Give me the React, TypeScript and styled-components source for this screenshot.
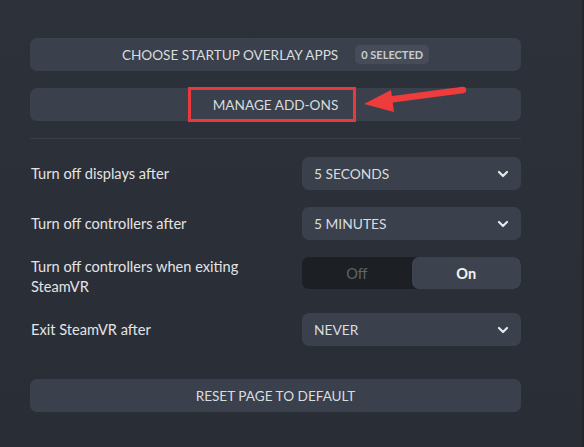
import styled, { createGlobalStyle } from "styled-components";

const GlobalStyle = createGlobalStyle`
  html, body {
    margin: 0;
    padding: 0;
    background: #2a2e36;
  }
  * {
    box-sizing: border-box;
  }
`

const Page = styled.div`
  position: relative;
  width: 584px;
  height: 447px;
  padding: 38px 61px 0 30px;
  background: linear-gradient(180deg, #2d313a 0%, #292d35 100%);
  border-right: 2px solid #23262d;
  font-family: "Lato", "Noto Sans", sans-serif;
  color: #dcdedf;
  overflow: hidden;
`

const Stack = styled.div`
  display: flex;
  flex-direction: column;
`

const WideButton = styled.div<{ $gap?: number }>`
  position: relative;
  display: flex;
  align-items: center;
  justify-content: center;
  gap: 17px;
  height: 33px;
  margin-bottom: ${p => p.$gap ?? 17}px;
  border-radius: 7px;
  background: #3b414c;
  font-size: 13.6px;
  color: #d9dcdf;
  text-transform: uppercase;
`

const Badge = styled.span`
  display: inline-flex;
  align-items: center;
  height: 19px;
  padding: 0 6px;
  border-radius: 5px;
  background: #474d58;
  font-size: 11px;
  font-weight: 700;
  color: #c8ccd1;
`

const Divider = styled.div`
  height: 1px;
  background: #3a3f48;
  margin-bottom: 18px;
`

const Row = styled.div<{ $gap?: number; $top?: boolean }>`
  display: flex;
  align-items: ${p => (p.$top ? "flex-start" : "center")};
  justify-content: space-between;
  margin-bottom: ${p => p.$gap ?? 17}px;
`

const Label = styled.div`
  width: 236px;
  margin-left: 1px;
  font-size: 14.6px;
  line-height: 20px;
  color: #e2e4e6;
`

const Select = styled.div`
  display: flex;
  align-items: center;
  justify-content: space-between;
  width: 219px;
  height: 33px;
  padding: 0 12px 0 12px;
  border-radius: 7px;
  background: #3b414c;
  font-size: 13.8px;
  color: #d9dcdf;
`

const Toggle = styled.div`
  display: flex;
  width: 219px;
  height: 32px;
  border-radius: 7px;
  background: #1c1f24;
  overflow: hidden;
`

const ToggleHalf = styled.div<{ $active?: boolean }>`
  flex: 1;
  display: flex;
  align-items: center;
  justify-content: center;
  border-radius: 7px;
  background: ${p => (p.$active ? "#3d434e" : "transparent")};
  color: ${p => (p.$active ? "#f2f3f4" : "#5f636a")};
  font-weight: ${p => (p.$active ? 700 : 400)};
  font-size: 14.5px;
`

const Highlight = styled.div`
  position: absolute;
  left: 158px;
  top: -1px;
  width: 168px;
  height: 35px;
  border: 3px solid #e8393c;
`

const Arrow = styled.svg`
  position: absolute;
  left: 359px;
  top: 84px;
`

const Chevron = () => (
  <svg width="12" height="12" viewBox="0 0 12 12">
    <path d="M2 4 L6 8 L10 4" fill="none" stroke="#e6e8ea" strokeWidth="2.2" strokeLinecap="round" strokeLinejoin="round" />
  </svg>
)

const settings = [
  { label: "Turn off displays after", value: "5 SECONDS" },
  { label: "Turn off controllers after", value: "5 MINUTES" },
]

export default function App() {
  return (
    <>
      <GlobalStyle />
      <Page>
        <Stack>
          <WideButton>
            Choose Startup Overlay Apps
            <Badge>0 SELECTED</Badge>
          </WideButton>
          <WideButton>
            Manage Add-Ons
            <Highlight />
          </WideButton>
          <Divider />
          {settings.map(s => (
            <Row key={s.label}>
              <Label>{s.label}</Label>
              <Select>
                {s.value}
                <Chevron />
              </Select>
            </Row>
          ))}
          <Row $gap={16} $top>
            <Label>Turn off controllers when exiting SteamVR</Label>
            <Toggle>
              <ToggleHalf>Off</ToggleHalf>
              <ToggleHalf $active>On</ToggleHalf>
            </Toggle>
          </Row>
          <Row $gap={33}>
            <Label>Exit SteamVR after</Label>
            <Select>
              NEVER
              <Chevron />
            </Select>
          </Row>
          <WideButton>Reset Page to Default</WideButton>
        </Stack>
        <Arrow width="110" height="30" viewBox="0 0 110 30">
          <path d="M104 6 L28 16" stroke="#ee3b3b" strokeWidth="6.5" strokeLinecap="round" />
          <path d="M5 20 L32 6 L35 28 Z" fill="#ee3b3b" />
        </Arrow>
      </Page>
    </>
  )
}
